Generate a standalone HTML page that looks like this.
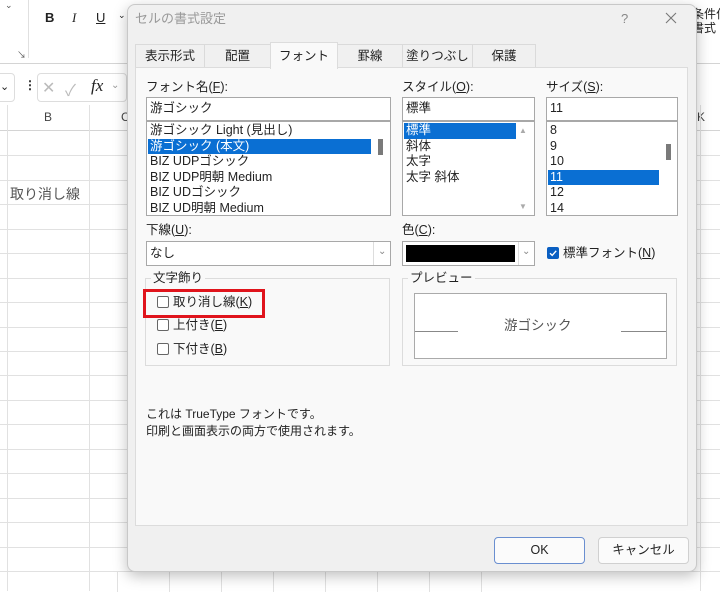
<!DOCTYPE html>
<html><head><meta charset="utf-8"><style>
*{box-sizing:border-box;margin:0;padding:0}
body{width:720px;height:591px;overflow:hidden;background:#fff;font-family:"Liberation Sans","Noto Sans CJK JP",sans-serif;font-size:12px;color:#222;position:relative}
.a{position:absolute}
.vl{position:absolute;width:1px;background:#e1e1e1}
.hl{position:absolute;height:1px;background:#e1e1e1}
.box{position:absolute;background:#fff;border:1px solid #a8a8a8}
.it{position:absolute;left:3px;white-space:nowrap;height:15.5px;line-height:15.5px;font-size:12.5px}
.sel{background:#0a6fd3;color:#fff}
.lbl{position:absolute;font-size:12.5px;white-space:nowrap;line-height:14px}
.cb{position:absolute;width:12px;height:12px;border:1px solid #666;border-radius:2px;background:#fff}
.tab{position:absolute;top:44px;height:24px;border:1px solid #dadada;border-bottom:none;background:#f0f0f0;text-align:center;line-height:23px;font-size:12.5px}
.sb{position:absolute;width:5px;height:16px;background:#7a7a7a}
</style></head><body>
<!-- ribbon -->
<div class="a" style="left:0;top:0;width:720px;height:64px;background:#fff;border-bottom:1px solid #d4d4d4"></div>
<div class="a" style="left:5px;top:0;font-size:9px;color:#555">⌄</div>
<div class="a" style="left:28px;top:0;width:1px;height:58px;background:#e0e0e0"></div>
<div class="a" style="left:45px;top:10px;font-weight:bold;font-size:13px">B</div>
<div class="a" style="left:72px;top:10px;font-style:italic;font-size:13px;font-family:'Liberation Serif',serif">I</div>
<div class="a" style="left:96px;top:10px;text-decoration:underline;font-size:13px">U</div>
<div class="a" style="left:118px;top:10px;font-size:9px">⌄</div>
<div class="a" style="left:17px;top:48px;font-size:9px;color:#555">↘</div>
<div class="a" style="left:692px;top:7px;font-size:12px;line-height:14px;white-space:nowrap">条件付<br>書式</div>
<!-- formula bar -->
<div class="a" style="left:-5px;top:73px;width:20px;height:29px;border:1px solid #ddd;border-radius:4px;font-size:11px;padding:6px 0 0 4px">⌄</div>
<div class="a" style="left:24px;top:78px;font-weight:bold">⋮</div>
<div class="a" style="left:37px;top:73px;width:90px;height:29px;border:1px solid #ddd;border-radius:4px"></div>
<div class="a" style="left:42px;top:78px;color:#bbb;font-size:16px">✕</div>
<div class="a" style="left:65px;top:77px;color:#bbb;font-size:16px">✓</div>
<div class="a" style="left:91px;top:76px;font-style:italic;font-family:'Liberation Serif',serif;font-size:17px">fx</div>
<div class="a" style="left:111px;top:80px;font-size:10px;color:#999">⌄</div>
<!-- grid -->
<div class="a" style="left:0;top:105px;width:720px;height:26px;background:#fff;border-bottom:1px solid #d4d4d4"></div>
<div class="a" style="left:44px;top:110px;font-size:12px;color:#444">B</div>
<div class="a" style="left:121px;top:110px;font-size:12px;color:#444">C</div>
<div class="a" style="left:697px;top:110px;font-size:12px;color:#444">K</div>
<div class="vl" style="left:7px;top:105px;height:486px"></div>
<div class="vl" style="left:89px;top:105px;height:486px"></div>
<div class="hl" style="left:0;top:155px;width:720px"></div>
<div class="hl" style="left:0;top:180px;width:720px"></div>
<div class="hl" style="left:0;top:204px;width:720px"></div>
<div class="hl" style="left:0;top:229px;width:720px"></div>
<div class="hl" style="left:0;top:253px;width:720px"></div>
<div class="hl" style="left:0;top:278px;width:720px"></div>
<div class="hl" style="left:0;top:302px;width:720px"></div>
<div class="hl" style="left:0;top:327px;width:720px"></div>
<div class="hl" style="left:0;top:351px;width:720px"></div>
<div class="hl" style="left:0;top:375px;width:720px"></div>
<div class="hl" style="left:0;top:400px;width:720px"></div>
<div class="hl" style="left:0;top:424px;width:720px"></div>
<div class="hl" style="left:0;top:449px;width:720px"></div>
<div class="hl" style="left:0;top:473px;width:720px"></div>
<div class="hl" style="left:0;top:498px;width:720px"></div>
<div class="hl" style="left:0;top:522px;width:720px"></div>
<div class="hl" style="left:0;top:547px;width:720px"></div>
<div class="hl" style="left:0;top:571px;width:720px"></div>
<div class="vl" style="left:117px;top:572px;height:20px"></div>
<div class="vl" style="left:169px;top:572px;height:20px"></div>
<div class="vl" style="left:221px;top:572px;height:20px"></div>
<div class="vl" style="left:273px;top:572px;height:20px"></div>
<div class="vl" style="left:325px;top:572px;height:20px"></div>
<div class="vl" style="left:377px;top:572px;height:20px"></div>
<div class="vl" style="left:429px;top:572px;height:20px"></div>
<div class="vl" style="left:481px;top:572px;height:20px"></div>
<div class="vl" style="left:700px;top:105px;height:486px"></div>
<div class="a" style="left:10px;top:184px;font-size:14px;color:#555">取り消し線</div>
<!-- dialog -->
<div class="a" style="left:127px;top:4px;width:570px;height:568px;background:#f0f0f0;border:1px solid #c8c8c8;border-radius:8px;box-shadow:0 4px 14px rgba(0,0,0,.25)"></div>
<div class="a" style="left:135px;top:11px;font-size:13px;color:#999;line-height:16px">セルの書式設定</div>
<div class="a" style="left:621px;top:11px;font-size:13px;color:#888;line-height:16px">?</div>
<svg class="a" style="left:665px;top:12px" width="12" height="12"><path d="M1 1L11 11M11 1L1 11" stroke="#777" stroke-width="1.1"/></svg>
<div class="tab" style="left:135px;width:70px">表示形式</div>
<div class="tab" style="left:204px;width:67px">配置</div>
<div class="tab" style="left:337px;width:66px">罫線</div>
<div class="tab" style="left:402px;width:71px">塗りつぶし</div>
<div class="tab" style="left:472px;width:64px">保護</div>
<div class="a" style="left:135px;top:67px;width:553px;height:459px;background:#f9f9f9;border:1px solid #dcdcdc"></div>
<div class="tab" style="left:270px;top:42px;width:68px;height:27px;background:#f9f9f9;line-height:26px;border-color:#dcdcdc">フォント</div>

<div class="lbl" style="left:146px;top:80px">フォント名(<u>F</u>):</div>
<div class="box" style="left:146px;top:97px;width:245px;height:24px"><div class="it" style="top:3px">游ゴシック</div></div>
<div class="box" style="left:146px;top:121px;width:245px;height:95px">
<div class="it" style="top:1px">游ゴシック Light (見出し)</div>
<div class="it sel" style="top:16.5px;width:223px;left:1px;padding-left:2px">游ゴシック (本文)</div>
<div class="it" style="top:32px">BIZ UDPゴシック</div>
<div class="it" style="top:47.5px">BIZ UDP明朝 Medium</div>
<div class="it" style="top:63px">BIZ UDゴシック</div>
<div class="it" style="top:78.5px">BIZ UD明朝 Medium</div>
<div class="sb" style="left:231px;top:17px"></div></div>

<div class="lbl" style="left:402px;top:80px">スタイル(<u>O</u>):</div>
<div class="box" style="left:402px;top:97px;width:133px;height:24px"><div class="it" style="top:3px">標準</div></div>
<div class="box" style="left:402px;top:121px;width:133px;height:95px">
<div class="it sel" style="top:1px;left:1px;width:112px;padding-left:2px">標準</div>
<div class="it" style="top:16.5px">斜体</div>
<div class="it" style="top:32px">太字</div>
<div class="it" style="top:47.5px">太字 斜体</div>
<div class="a" style="left:116px;top:4px;font-size:8px;color:#aaa">▲</div>
<div class="a" style="left:116px;top:80px;font-size:8px;color:#aaa">▼</div></div>

<div class="lbl" style="left:546px;top:80px">サイズ(<u>S</u>):</div>
<div class="box" style="left:546px;top:97px;width:132px;height:24px"><div class="it" style="top:3px">11</div></div>
<div class="box" style="left:546px;top:121px;width:132px;height:95px">
<div class="it" style="top:1px">8</div>
<div class="it" style="top:16.5px">9</div>
<div class="it" style="top:32px">10</div>
<div class="it sel" style="top:47.5px;left:1px;width:111px;padding-left:2px">11</div>
<div class="it" style="top:63px">12</div>
<div class="it" style="top:78.5px">14</div>
<div class="sb" style="left:119px;top:22px"></div></div>

<div class="lbl" style="left:146px;top:223px">下線(<u>U</u>):</div>
<div class="box" style="left:146px;top:241px;width:245px;height:25px"><div class="it" style="top:4px">なし</div><div class="a" style="left:226px;top:0;width:1px;height:23px;background:#ddd"></div><div class="a" style="left:231px;top:4px;font-size:10px;color:#888">⌄</div></div>
<div class="lbl" style="left:402px;top:223px">色(<u>C</u>):</div>
<div class="box" style="left:402px;top:241px;width:133px;height:25px"><div class="a" style="left:3px;top:3px;width:109px;height:17px;background:#000"></div><div class="a" style="left:115px;top:0;width:1px;height:23px;background:#ddd"></div><div class="a" style="left:119px;top:4px;font-size:10px;color:#888">⌄</div></div>
<div class="a" style="left:547px;top:247px;width:12px;height:12px;background:#0a5fc2;border-radius:2px"><svg width="12" height="12"><path d="M3 6.2L5.2 8.4L9.2 3.8" stroke="#fff" stroke-width="1.4" fill="none"/></svg></div>
<div class="lbl" style="left:563px;top:246px">標準フォント(<u>N</u>)</div>

<div class="a" style="left:145px;top:278px;width:245px;height:88px;border:1px solid #dcdcdc"></div>
<div class="lbl" style="left:151px;top:271px;background:#f9f9f9;padding:0 2px">文字飾り</div>
<div class="cb" style="left:157px;top:296px"></div><div class="lbl" style="left:173px;top:295px">取り消し線(<u>K</u>)</div>
<div class="cb" style="left:157px;top:319px"></div><div class="lbl" style="left:173px;top:318px">上付き(<u>E</u>)</div>
<div class="cb" style="left:157px;top:343px"></div><div class="lbl" style="left:173px;top:342px">下付き(<u>B</u>)</div>
<div class="a" style="left:143px;top:289px;width:122px;height:29px;border:3px solid #e0141c"></div>

<div class="a" style="left:402px;top:278px;width:275px;height:88px;border:1px solid #dcdcdc"></div>
<div class="lbl" style="left:408px;top:271px;background:#f9f9f9;padding:0 2px">プレビュー</div>
<div class="a" style="left:414px;top:293px;width:253px;height:66px;border:1px solid #aaa;background:#fff"></div>
<div class="a" style="left:415px;top:331px;width:43px;height:1px;background:#888"></div>
<div class="a" style="left:621px;top:331px;width:45px;height:1px;background:#888"></div>
<div class="a" style="left:504px;top:318px;font-size:13.5px;color:#555;line-height:16px">游ゴシック</div>

<div class="lbl" style="left:146px;top:407px;font-size:12px">これは TrueType フォントです。</div>
<div class="lbl" style="left:146px;top:424px;font-size:12px">印刷と画面表示の両方で使用されます。</div>

<div class="a" style="left:494px;top:537px;width:91px;height:27px;border:1px solid #6a8fd0;border-radius:4px;background:#fbfbfb;text-align:center;line-height:25px;font-size:12.5px">OK</div>
<div class="a" style="left:598px;top:537px;width:91px;height:27px;border:1px solid #d0d0d0;border-radius:4px;background:#fbfbfb;text-align:center;line-height:25px;font-size:12.5px">キャンセル</div>
</body></html>
